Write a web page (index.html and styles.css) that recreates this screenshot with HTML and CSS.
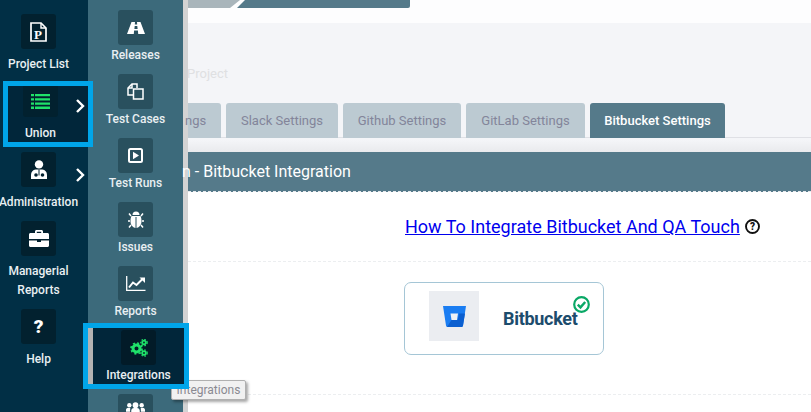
FILE: index.html
```html
<!DOCTYPE html>
<html lang="en">
<head>
<meta charset="utf-8">
<title>Bitbucket Settings</title>
<link rel="stylesheet" href="styles.css">
</head>
<body>
<div class="app">
  <nav class="nav-primary">
    <a class="nav-item item-project">
      <span class="tile"><svg width="17" height="20" viewBox="0 0 17 20"><path d="M1 1h10l5 5v13H1z" fill="none" stroke="#fff" stroke-width="1.700"/><path d="M11 1v5h5" fill="none" stroke="#fff" stroke-width="1.400"/><text x="8" y="16.500" class="glyph-p">P</text></svg></span>
      <span class="label">Project List</span>
    </a>
    <a class="nav-item item-union">
      <span class="tile"><svg width="19" height="15" viewBox="0 0 19 15" fill="#1fe36a"><path d="M0 0h3v2.300H0zM4 0h15v2.300H4zM0 4.200h3v2.300H0zM4 4.200h15v2.300H4zM0 8.400h3v2.300H0zM4 8.400h15v2.300H4zM0 12.600h3V15H0zM4 12.600h15V15H4z"/></svg></span>
      <span class="label">Union</span>
      <svg class="chevron" width="10" height="16" viewBox="0 0 10 16"><path d="M2 2l6 6-6 6" fill="none" stroke="#fff" stroke-width="2.400"/></svg>
    </a>
    <a class="nav-item item-admin">
      <span class="tile"><svg width="16" height="19" viewBox="0 0 16 19" fill="#fff"><circle cx="8" cy="4.400" r="4.200"/><path d="M0 19v-4c0-3 2-5 4.500-5.400h7C14 10 16 12 16 15v4z"/><circle cx="5" cy="15" r="1.800" fill="#02212f"/><circle cx="11.500" cy="15" r="1.800" fill="#02212f"/><path d="M8 9.500v6" stroke="#02212f"/></svg></span>
      <span class="label">Administration</span>
      <svg class="chevron" width="10" height="16" viewBox="0 0 10 16"><path d="M2 2l6 6-6 6" fill="none" stroke="#fff" stroke-width="2.400"/></svg>
    </a>
    <a class="nav-item item-reports">
      <span class="tile"><svg width="20" height="17" viewBox="0 0 20 17" fill="#fff"><path d="M6 3V1.500C6 .7 6.700 0 7.500 0h5c.8 0 1.500.7 1.500 1.500V3h4.500c.8 0 1.500.7 1.500 1.500V9H0V4.500C0 3.700.7 3 1.500 3zm1.800 0h4.400V1.800H7.800zM0 10.500h8V12h4v-1.500h8v5c0 .8-.7 1.500-1.500 1.500h-17C.7 17 0 16.300 0 15.500z"/></svg></span>
      <span class="label">Managerial<br>Reports</span>
    </a>
    <a class="nav-item item-help">
      <span class="tile"><span class="question">?</span></span>
      <span class="label">Help</span>
    </a>
  </nav>
  <nav class="nav-secondary">
    <a class="nav-item sub">
      <span class="tile"><svg width="18" height="12" viewBox="0 0 18 12" fill="#fff"><path d="M4.500 0H8L7.800 2.500h2.400L10 0h3.500L18 12h-6.800l-.3-3.500H7.100L6.800 12H0zM7.700 4l-.3 3h3.200l-.3-3z" fill-rule="evenodd"/></svg></span>
      <span class="label">Releases</span>
    </a>
    <a class="nav-item sub">
      <span class="tile"><svg width="17" height="17" viewBox="0 0 17 17" fill="none" stroke="#fff" stroke-width="1.500"><path d="M6 12H1V5l4-4h5v4"/><path d="M6.500 6H16v10H6.500z"/><path d="M5 1v4H1"/></svg></span>
      <span class="label">Test Cases</span>
    </a>
    <a class="nav-item sub">
      <span class="tile"><svg width="15" height="15" viewBox="0 0 15 15"><rect x="1" y="1" width="13" height="13" rx="1.500" fill="none" stroke="#fff" stroke-width="2"/><path d="M5 3.800L11 7.500 5 11.200z" fill="#fff"/></svg></span>
      <span class="label">Test Runs</span>
    </a>
    <a class="nav-item sub">
      <span class="tile"><svg width="16" height="17" viewBox="0 0 16 17" fill="#fff"><path d="M4.500 4a3.500 3.500 0 0 1 7 0zM3.500 5h9c.8 2 1 3 1 5.500 0 3.500-2.500 6.500-5.500 6.500s-5.500-3-5.500-6.500c0-2.500.2-3.500 1-5.500z"/><path d="M3 5L1 2.500M13 5l2-2.500M2 10H0M14 10h2M3 14l-2 2.500M13 14l2 2.500" stroke="#fff" stroke-width="1.500"/><path d="M8 6v11" stroke="#29505e"/></svg></span>
      <span class="label">Issues</span>
    </a>
    <a class="nav-item sub">
      <span class="tile"><svg width="20" height="15" viewBox="0 0 20 15" fill="none" stroke="#fff"><path d="M.7 0v14.300H19.500" stroke-width="1.300"/><path d="M3 11.500l4-5 3.500 2.500 6-6" stroke-width="2"/><path d="M13.500 1.500H19V7z" fill="#fff" stroke="none"/></svg></span>
      <span class="label">Reports</span>
    </a>
    <a class="nav-item sub item-integrations">
      <span class="tile"><svg width="18" height="18" viewBox="0 0 18 18" fill="none" stroke="#1fe36a"><circle cx="6.500" cy="9.500" r="3.500" stroke-width="3"/><circle cx="6.500" cy="9.500" r="5.500" stroke-width="1.600" stroke-dasharray="2 2.320"/><circle cx="14" cy="3.500" r="1.800" stroke-width="1.800"/><circle cx="14" cy="3.500" r="3.200" stroke-width="1.200" stroke-dasharray="1.500 1.500"/><circle cx="14" cy="14" r="1.800" stroke-width="1.800"/><circle cx="14" cy="14" r="3.200" stroke-width="1.200" stroke-dasharray="1.500 1.500"/></svg></span>
      <span class="label">Integrations</span>
    </a>
    <a class="nav-item sub">
      <span class="tile"><svg class="people-icon" width="19" height="14" viewBox="0 0 20 14" fill="#fff"><circle cx="10" cy="4" r="3"/><circle cx="3.500" cy="4" r="2.300"/><circle cx="16.500" cy="4" r="2.300"/><path d="M5.500 14V10c0-1.800 1.200-3 3-3h3c1.800 0 3 1.200 3 3v4zM0 11V9c0-1.300 1-2.300 2.300-2.300h2.200C4.500 8 4.300 9.500 4.300 11zM20 11V9c0-1.300-1-2.300-2.300-2.300h-2.200c0 1.300.2 2.800.2 4.300z"/></svg></span>
    </a>
  </nav>
  <main class="content">
    <div class="topbar">
      <span class="crumb crumb-muted"></span>
      <span class="crumb crumb-active"></span>
    </div>
    <section class="settings">
      <p class="project-name">Project</p>
      <div class="tabs">
        <span class="tab tab-cut">ngs</span>
        <span class="tab tab-slack">Slack Settings</span>
        <span class="tab tab-github">Github Settings</span>
        <span class="tab tab-gitlab">GitLab Settings</span>
        <span class="tab tab-active">Bitbucket Settings</span>
      </div>
    </section>
    <header class="panel-head">n - Bitbucket Integration</header>
    <div class="help-row">
      <a class="help-link" href="#">How To Integrate Bitbucket And QA Touch</a>
      <svg class="help-icon" width="15" height="15" viewBox="0 0 15 15"><circle cx="7.500" cy="7.500" r="6.500" fill="none" stroke="#111" stroke-width="1.900"/><text x="7.500" y="11.200" class="glyph-q">?</text></svg>
    </div>
    <div class="card-row">
      <div class="card">
        <span class="logo-box"><svg width="23" height="21" viewBox="0 0 23 21"><path d="M0 0h23l-3 19.500c-.1.900-.7 1.500-1.500 1.500h-14c-.8 0-1.400-.6-1.500-1.500z" fill="#1a7df2"/><path d="M22 7.500h-6l-1.200 6.500H8.500L4 21h14.500c.8 0 1.400-.6 1.500-1.500z" fill="#0b5fd0"/><path d="M7.500 7.500H15l-1 6.500H8.500z" fill="#eef1f5"/></svg></span>
        <span class="brand">Bitbucket</span>
        <svg class="status" width="17" height="17" viewBox="0 0 17 17"><circle cx="8.500" cy="8.500" r="7.300" fill="#fff" stroke="#0aa866" stroke-width="2.200"/><path d="M4.800 8.700l2.700 2.700 4.700-5.400" fill="none" stroke="#0aa866" stroke-width="2.400"/></svg>
      </div>
    </div>
  </main>
  <div class="tooltip">Integrations</div>
</div>
</body>
</html>
```
FILE: styles.css
```css
* { box-sizing: border-box; }
html, body { margin: 0; padding: 0; height: 412px; overflow: hidden; background: #fff; }
body { font-family: Roboto, "Liberation Sans", sans-serif; }
.app { position: relative; display: flex; width: 811px; height: 412px; overflow: hidden; }

.nav-primary { flex: 0 0 88px; min-width: 0; height: 412px; background: #012f45; display: flex; flex-direction: column; padding-top: 14px; position: relative; z-index: 3; }
.nav-secondary { flex: 0 0 100px; min-width: 0; height: 412px; background: #3c6a7b; border-right: 5px solid #d3d3d3; display: flex; flex-direction: column; padding-top: 10px; }

.nav-item { position: relative; flex: none; display: flex; flex-direction: column; align-items: center; color: #e9eff2; font-size: 12px; font-weight: 500; line-height: 19px; text-align: center; white-space: nowrap; }
.tile { flex: none; display: flex; align-items: center; justify-content: center; width: 35px; height: 35px; border-radius: 3px; background: #02212f; }
.label { margin-top: 6px; }

.item-project { width: 77px; height: 67px; }
.item-union { width: 90px; height: 66px; margin-left: 3px; padding-right: 15px; border: 5px solid #00a5e9; background: #01263a; }
.item-union .tile { height: 31px; border-radius: 0 0 3px 3px; }
.item-union .label { margin-top: 7px; }
.item-admin { width: 77px; height: 69px; margin-top: 5px; }
.item-reports { width: 77px; height: 88px; }
.item-help { width: 77px; }
.chevron { position: absolute; left: 75px; top: 15px; }
.item-union .chevron { left: 67px; top: 12px; }

.sub { height: 64px; width: 95px; }
.sub .label { margin-top: 1px; }
.sub .tile { background: #29505e; }
.item-integrations { width: 106px; height: 66px; margin: -7px 0 5px -5px; padding-top: 2px; padding-left: 5px; border: 5px solid #00a5e9; background: #01263a; box-shadow: inset 5px 0 0 #b3b3b3; z-index: 6; }
.sub.item-integrations .tile { background: #021b28; }
.people-icon { margin-bottom: 8px; }

.question { color: #fff; font-size: 19px; font-weight: 900; line-height: 1; }
.glyph-p { font-family: "Liberation Serif", serif; font-size: 13px; font-weight: 700; fill: #fff; text-anchor: middle; }
.glyph-q { font-family: Roboto, sans-serif; font-size: 10px; font-weight: 900; fill: #111; text-anchor: middle; }

.content { flex: 1; min-width: 0; display: flex; flex-direction: column; background: #fff; }
.topbar { height: 23px; flex: none; background: #fdfdfe; display: flex; align-items: flex-start; }
.crumb { display: block; height: 8px; }
.crumb-muted { width: 52px; background: #a9b5bb; clip-path: polygon(0 0, 100% 0, 42px 100%, 0 100%); }
.crumb-active { width: 173px; margin-left: -3px; background: #557a8a; border-radius: 0 0 2px 0; clip-path: polygon(8px 0, 100% 0, 100% 100%, 0 100%); }

.settings { height: 129px; flex: none; background: linear-gradient(#f4f5f8 0, #f4f5f8 117px, #e9eaed 129px); display: flex; flex-direction: column; }
.project-name { margin: 42px 0 0 -1px; height: 18px; line-height: 18px; font-size: 13px; color: #dfe0e2; }
.tabs { display: flex; gap: 5px; margin-top: 20px; height: 35px; border-bottom: 1px solid #dfe0e5; }
.tab { flex: none; height: 35px; display: flex; align-items: center; justify-content: center; font-size: 13px; color: #83859a; background: #bccad2; border-radius: 3px 3px 0 0; }
.tab-cut { width: 33px; border-radius: 0 3px 0 0; justify-content: flex-start; text-indent: -3px; }
.tab-slack { width: 112px; }
.tab-github { width: 118px; }
.tab-gitlab { width: 119px; }
.tab-active { width: 135px; background: #557a8a; color: #fff; font-weight: 500; }

.panel-head { height: 40px; flex: none; background: #557a8a; color: #fff; font-size: 16px; line-height: 40px; text-indent: -6px; border-bottom: 1px dashed #e6e9ec; }
.help-row { height: 70px; flex: none; display: flex; align-items: center; padding-left: 217px; border-bottom: 1px dashed #eceef0; }
.help-link { font-size: 18px; color: #0000ee; text-decoration: underline; }
.help-icon { margin-left: 5px; }
.card-row { height: 133px; flex: none; padding: 20px 0 0 216px; border-bottom: 1px dashed #eceef0; }
.card { position: relative; width: 200px; height: 73px; border: 1px solid #a5c6d6; border-radius: 7px; display: flex; align-items: flex-start; padding: 8px 0 0 24px; background: #fff; }
.logo-box { width: 50px; height: 50px; background: #ebedf1; display: flex; align-items: center; justify-content: center; }
.brand { margin: 16px 0 0 24px; font-size: 18px; font-weight: 700; letter-spacing: -0.3px; line-height: 24px; color: #1c4c6c; }
.status { position: absolute; left: 168px; top: 13px; }

.tooltip { position: absolute; left: 171px; top: 380px; width: 75px; height: 20px; z-index: 5; background: #f1f1f1; border: 1px solid #b0b0b0; border-radius: 2px; box-shadow: 2px 2px 3px rgba(0,0,0,.35); font-size: 12px; line-height: 18px; text-align: center; color: #8a8a92; }
```
